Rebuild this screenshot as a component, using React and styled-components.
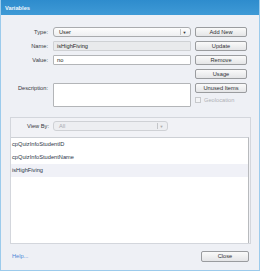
import React from 'react'
import styled, { createGlobalStyle } from 'styled-components'

const Global = createGlobalStyle`
  html, body { margin: 0; padding: 0; background: #fff; }
  * { box-sizing: border-box; }
`

const Window = styled.div`
  width: 260px;
  height: 271px;
  display: flex;
  flex-direction: column;
  background: #eef0f5;
  border: 1px solid #9ccbec;
  border-top: none;
  font-family: "Liberation Sans", Arial, sans-serif;
  font-size: 5.7px;
  color: #2e3034;
  overflow: hidden;
`
const TitleBar = styled.div`
  height: 15px;
  flex: none;
  display: flex;
  align-items: center;
  padding-left: 4px;
  background: linear-gradient(#2e8ccd, #3f9ad6);
  color: #eef6fc;
  font-weight: bold;
`
const Form = styled.div`
  display: grid;
  grid-template-columns: 39px 138px 52px;
  column-gap: 4px;
  row-gap: 4px;
  margin: 12px 0 0 9px;
  grid-auto-rows: 10px;
`
const Label = styled.div`
  text-align: right;
  line-height: 10px;
  color: #35383d;
  padding-right: 1px;
`
const Field = styled.div`
  height: ${({ $h }) => $h || 10}px;
  border: 1px solid ${({ $muted }) => ($muted ? '#cfd1d4' : '#b3b5b8')};
  background: ${({ $muted }) => ($muted ? '#e9eaec' : '#fff')};
  border-radius: 1px;
  padding-left: 3px;
  line-height: 8px;
  color: #1e1f22;
`
const Select = styled.div`
  height: 10px;
  display: flex;
  align-items: center;
  border: 1px solid ${({ $disabled }) => ($disabled ? '#cfd1d5' : '#a9abae')};
  border-radius: 3px;
  background: ${({ $disabled }) => ($disabled ? '#edeef1' : 'linear-gradient(#fdfdfd, #eeeff1)')};
  color: ${({ $disabled }) => ($disabled ? '#a8aab0' : '#1e1f22')};
  padding-left: 5px;
`
const SelectText = styled.span`
  flex: 1;
`
const Arrow = styled.span`
  width: 8px;
  height: 6px;
  border-left: 1px solid #c3c5c8;
  margin-right: 2px;
  display: flex;
  align-items: center;
  justify-content: center;
  font-size: 4px;
  color: ${({ $disabled }) => ($disabled ? '#aaa' : '#333')};
`
const Button = styled.div`
  height: ${({ $h }) => $h || 10}px;
  width: ${({ $w }) => $w || 'auto'};
  border: 1px solid #9a9c9f;
  border-radius: 2px;
  background: linear-gradient(#fafafa, #e4e5e7);
  color: #2e3034;
  display: flex;
  align-items: center;
  justify-content: center;
`
const Side = styled.div`
  grid-row: span 2;
  display: flex;
  flex-direction: column;
  gap: 4px;
`
const Check = styled.div`
  display: flex;
  align-items: center;
  gap: 3px;
  color: #b0b2b6;
`
const Box = styled.span`
  width: 6px;
  height: 6px;
  border: 1px solid #c7c9cc;
  background: #f3f4f6;
`
const Group = styled.div`
  margin: 10px 8px 0 9px;
  height: 127px;
  border: 1px solid #d3d6dc;
  background: #f1f2f6;
  display: flex;
  flex-direction: column;
`
const ViewRow = styled.div`
  display: grid;
  grid-template-columns: 39px 115px;
  column-gap: 3px;
  padding-top: 3px;
  height: 19px;
`
const List = styled.div`
  flex: 1;
  background: #fff;
  border-top: 1px solid #cdd0d5;
  border-right: 1px solid #b8babd;
  margin-right: 1px;
`
const Item = styled.div`
  height: 13px;
  line-height: 13px;
  padding-left: 1px;
  color: #2a3646;
  background: ${({ $sel }) => ($sel ? '#f0f1f7' : 'transparent')};
`
const Footer = styled.div`
  flex: 1;
  display: flex;
  align-items: center;
  justify-content: space-between;
  padding: 0 10px 2px 11px;
`
const Help = styled.span`
  color: #4b86d6;
`

export default function App() {
  return (
    <>
      <Global />
      <Window>
        <TitleBar>Variables</TitleBar>
        <Form>
          <Label>Type:</Label>
          <Select>
            <SelectText>User</SelectText>
            <Arrow>▼</Arrow>
          </Select>
          <Button>Add New</Button>

          <Label>Name:</Label>
          <Field $muted>isHighFiving</Field>
          <Button>Update</Button>

          <Label>Value:</Label>
          <Field>no</Field>
          <Button>Remove</Button>

          <div />
          <div />
          <Button>Usage</Button>

          <Label>Description:</Label>
          <Field $h={24} style={{ gridRow: 'span 2' }} />
          <Side>
            <Button>Unused Items</Button>
            <Check>
              <Box />
              Geolocation
            </Check>
          </Side>
        </Form>
        <Group>
          <ViewRow>
            <Label>View By:</Label>
            <Select $disabled>
              <SelectText>All</SelectText>
              <Arrow $disabled>▼</Arrow>
            </Select>
          </ViewRow>
          <List>
            <Item>cpQuizInfoStudentID</Item>
            <Item>cpQuizInfoStudentName</Item>
            <Item $sel>isHighFiving</Item>
          </List>
        </Group>
        <Footer>
          <Help>Help...</Help>
          <Button $w="48px" $h={11}>Close</Button>
        </Footer>
      </Window>
    </>
  )
}
